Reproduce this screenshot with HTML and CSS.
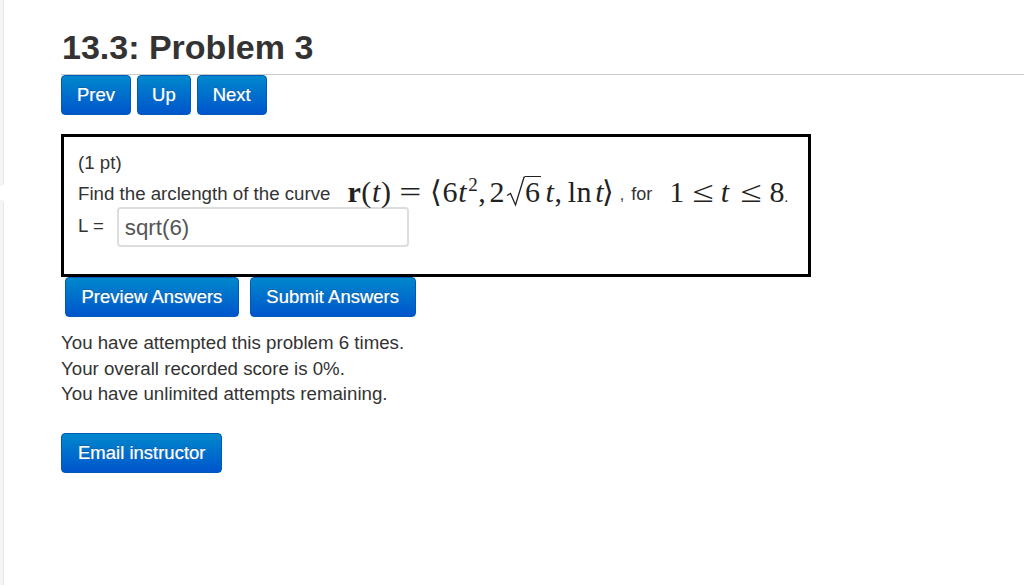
FILE: index.html
```html
<!DOCTYPE html>
<html lang="en">
<head>
<meta charset="utf-8">
<title>13.3: Problem 3</title>
<link rel="stylesheet" href="styles.css">
</head>
<body>
<div class="edge edge-top"></div>
<div class="edge edge-bottom"></div>
<main class="page">
  <h1 class="title">13.3: Problem 3</h1>
  <nav class="nav">
    <a class="btn">Prev</a>
    <a class="btn btn-up">Up</a>
    <a class="btn">Next</a>
  </nav>
  <section class="problem">
    <div class="pts">(1 pt)</div>
    <div class="statement">
      <span class="lead">Find the arclength of the curve</span>
      <span class="math m1"><b class="bf">r</b>(<i>t</i>)<span class="rel rel-eq"><span class="wide">=</span></span>⟨6<i>t</i><sup>2</sup>,<span class="thin-s"></span>2<span class="radical"><svg class="surd" viewBox="0 0 19 32" aria-hidden="true"><path d="M1 19.5 L4.5 17.5 L9.5 29 L18 1.2 L19 1.2" fill="none" stroke="#222" stroke-width="1.3"/></svg><span class="radicand">6</span></span><span class="thin"></span><i>t</i>,<span class="thin"></span>ln<span class="thin-s"></span><i>t</i><span class="close">⟩</span></span>
      <span class="comma">,</span>
      <span class="for">for</span>
      <span class="math m2">1<span class="rel rel-le"><span class="wide">≤</span></span><i>t</i><span class="rel rel-le2"><span class="wide">≤</span></span>8<small class="dot">.</small></span>
    </div>
    <div class="answer">
      <label class="lbl">L =</label>
      <input class="field" type="text" value="sqrt(6)">
    </div>
  </section>
  <div class="actions">
    <a class="btn btn-wide">Preview Answers</a>
    <a class="btn btn-wide">Submit Answers</a>
  </div>
  <p class="status">You have attempted this problem 6 times.<br>Your overall recorded score is 0%.<br>You have unlimited attempts remaining.</p>
  <a class="btn email">Email instructor</a>
</main>
</body>
</html>
```
FILE: styles.css
```css
* { box-sizing: border-box; }
html, body { margin: 0; height: 100%; background: #fff; overflow: hidden; }
body { font-family: "Liberation Sans", Arial, sans-serif; color: #333; position: relative; }
.edge { position: absolute; left: 0; width: 4px; background: #f5f5f5; border-right: 1px solid #e6e6e6; }
.edge-top { top: 0; height: 186px; border-bottom-right-radius: 4px; }
.edge-bottom { top: 200px; bottom: 0; border-top-right-radius: 4px; }
.page { padding: 28px 0 0 61px; }
.title { margin: 0; font-size: 34px; line-height: 38px; font-weight: 700; color: #333; padding-left: 1px; }
.nav { margin-top: 8px; border-top: 1px solid #ccc; display: flex; gap: 6px; }
.btn { display: inline-block; height: 40px; line-height: 37px; padding: 0 15px; font-size: 18.5px; color: #fff; border-radius: 4px; border: 1px solid #0058b8; background: linear-gradient(#0088cc, #0055cc); text-shadow: 0 0 1px rgba(255,255,255,.6), 0 -1px 0 rgba(0,0,0,.25); white-space: nowrap; }
.btn-up { padding: 0 14px; }
.btn-wide { padding: 0 15.5px; }
.problem { width: 750px; height: 143px; margin-top: 19px; border: 3px solid #000; padding: 16px 14px 0; color: #333; }
.pts { font-size: 18.7px; line-height: 20px; }
.statement { display: flex; align-items: baseline; height: 32px; margin-top: 1px; line-height: 32px; white-space: nowrap; font-size: 18.7px; }
.lead { font-size: 18.7px; }
.math { display: inline-flex; align-items: baseline; font-family: "Liberation Serif", "Times New Roman", serif; color: #222; font-size: 30px; transform: translateY(2px); }
.m1 { margin-left: 17px; letter-spacing: .6px; }
.m2 { margin-left: 17px; }
.bf { font-weight: 700; }
.rel { display: inline-block; }
.rel-eq { padding: 0 10px 0 11px; }
.rel-le { padding: 0 9px 0 11px; }
.rel-le2 { padding: 0 10px 0 14px; }
.wide { display: inline-block; transform: scaleX(1.3); }
.thin { width: 5px; }
.thin-s { width: 3px; }
.close { margin-left: -2px; }
.math sup { font-size: 19px; line-height: 0; position: relative; top: -11px; margin-left: 1px; }
.radical { display: inline-flex; align-items: baseline; }
.surd { width: 19px; height: 32px; align-self: flex-start; margin-top: -4px; margin-left: 1px; }
.radicand { border-top: 1.3px solid #222; line-height: 30px; margin-top: -4px; }
.comma { font-size: 16px; margin-left: 5px; }
.for { font-size: 18px; margin-left: 7px; }
.dot { font-size: 14px; }
.answer { display: flex; align-items: center; gap: 13px; margin-top: 1px; }
.lbl { font-size: 18.7px; margin-top: -2px; }
.field { width: 292px; height: 40px; border: 2px solid #ddd; border-radius: 4px; padding: 1px 6px 0; font: 22.3px "Liberation Sans", Arial, sans-serif; color: #555; background: #fff; outline: none; }
.actions { display: flex; gap: 11px; margin: 0 0 0 4px; }
.status { margin: 13px 0 0; font-size: 18.7px; line-height: 25.5px; color: #333; }
.email { margin-top: 26px; padding: 0 16px; }
```
